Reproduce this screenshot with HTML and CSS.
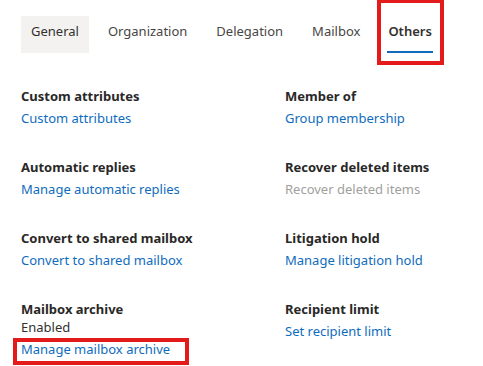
FILE: index.html
```html
<!DOCTYPE html>
<html lang="en">
<head>
    <meta charset="UTF-8">
    <title>Mailbox properties - Others</title>
    <link rel="stylesheet" href="styles.css">
</head>
<body>
    <div class="panel">
        <div class="tabs">
            <div class="tab selected">General</div>
            <div class="tab">Organization</div>
            <div class="tab">Delegation</div>
            <div class="tab">Mailbox</div>
            <div class="tab active">Others</div>
        </div>

        <div class="sections">
            <div class="section">
                <div class="label">Custom attributes</div>
                <a class="action" href="#">Custom attributes</a>
            </div>
            <div class="section">
                <div class="label">Member of</div>
                <a class="action" href="#">Group membership</a>
            </div>
            <div class="section">
                <div class="label">Automatic replies</div>
                <a class="action" href="#">Manage automatic replies</a>
            </div>
            <div class="section">
                <div class="label">Recover deleted items</div>
                <span class="action disabled">Recover deleted items</span>
            </div>
            <div class="section">
                <div class="label">Convert to shared mailbox</div>
                <a class="action" href="#">Convert to shared mailbox</a>
            </div>
            <div class="section">
                <div class="label">Litigation hold</div>
                <a class="action" href="#">Manage litigation hold</a>
            </div>
            <div class="section">
                <div class="label">Mailbox archive</div>
                <div class="value">Enabled</div>
                <a class="action" href="#">Manage mailbox archive</a>
            </div>
            <div class="section">
                <div class="label">Recipient limit</div>
                <a class="action" href="#">Set recipient limit</a>
            </div>
        </div>
    </div>

    <!-- highlight boxes from the screenshot -->
    <div class="mark mark-tab"></div>
    <div class="mark mark-archive"></div>
</body>
</html>
```

FILE: styles.css
```css
body {
    margin: 0;
    background-color: #fff;
    font-family: "Noto Sans", "Open Sans", sans-serif;
    font-size: 13px;
    color: #323130;
    position: relative;
    height: 366px;
    overflow: hidden;
}
.panel {
    padding: 16px 0 0 21px;
}
.tabs {
    display: flex;
    gap: 9px;
}
.tab {
    position: relative;
    height: 37px;
    box-sizing: border-box;
    padding: 5px 10px 0;
    line-height: 20px;
    color: #484644;
}
.tab.selected {
    background-color: #f3f2f1;
    color: #323130;
}
.tab.active {
    font-weight: 600;
    color: #323130;
    padding: 5px 8px 0 9px;
}
.tab.active::after {
    content: "";
    position: absolute;
    left: 8px;
    right: 7px;
    bottom: 0;
    height: 2px;
    background-color: #0f6cbd;
}
.sections {
    display: grid;
    grid-template-columns: 264px 1fr;
    row-gap: 31px;
    margin-top: 34px;
}
.section {
    display: flex;
    flex-direction: column;
    align-items: flex-start;
    line-height: 18px;
}
.label {
    font-weight: 700;
    color: #292827;
}
.action {
    margin-top: 4px;
    color: #0f6cbd;
    text-decoration: none;
}
.action.disabled {
    color: #a19f9d;
}
.mark {
    position: absolute;
    border: 4px solid #e31b1b;
    box-sizing: border-box;
}
.mark-tab {
    left: 377px;
    top: -1px;
    width: 67px;
    height: 66px;
}
.mark-archive {
    left: 13px;
    top: 338px;
    width: 176px;
    height: 27px;
}
```
